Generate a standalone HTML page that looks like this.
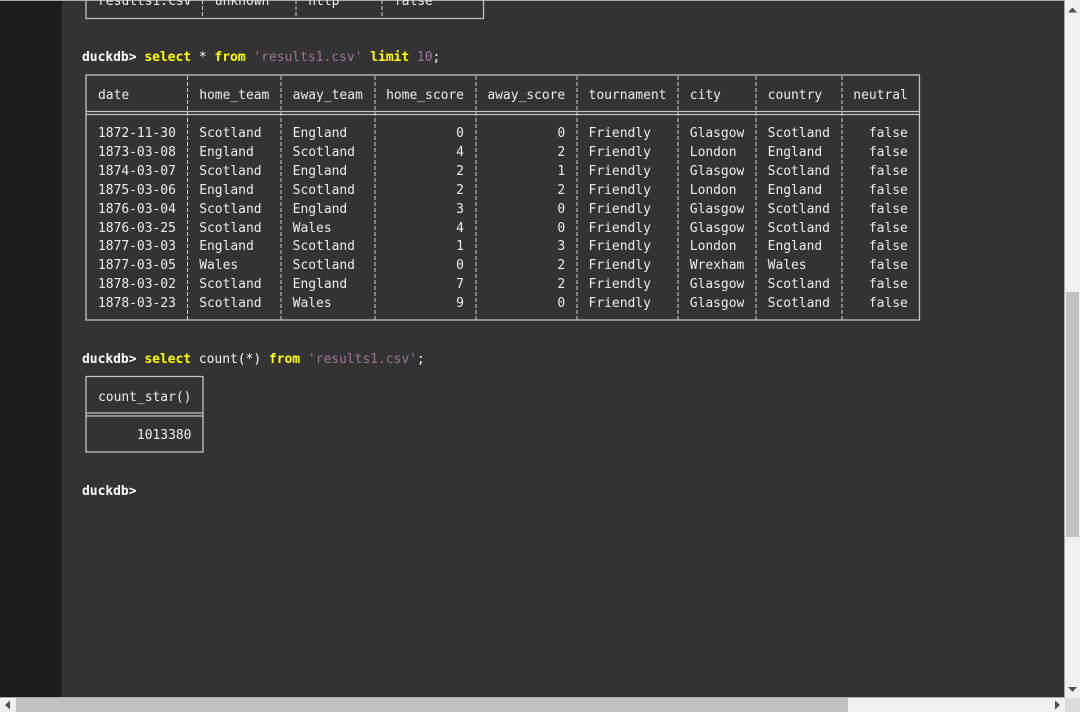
<!DOCTYPE html>
<html>
<head>
<meta charset="utf-8">
<style>
html,body{margin:0;padding:0;width:1080px;height:712px;overflow:hidden;background:#333}
#main{position:absolute;left:62px;top:0;width:1003px;height:698px;background:#333}
#side{position:absolute;left:0;top:0;width:62px;height:698px;background:#1c1c1c}
#top{position:absolute;left:0;top:0;width:1065px;height:1px;background:#aaa}
svg{position:absolute;left:0;top:0}
.l{position:absolute;margin:0;white-space:pre;font:13px/19px "DejaVu Sans Mono","Liberation Mono",monospace;color:#ececec;left:98px;letter-spacing:-0.04px}
.p{left:82px;color:#f4f4f4}
b{font-weight:bold;color:#fff}
.k{font-weight:bold;color:#ffff00}
.s{color:#a0709c}
#vs{position:absolute;left:1065px;top:0;width:15px;height:698px;background:#f1f1f1}
#vt{position:absolute;left:1066px;top:292px;width:13px;height:245px;background:#c1c1c1}
#hs{position:absolute;left:0;top:698px;width:1065px;height:14px;background:#f1f1f1}
#ht{position:absolute;left:16px;top:698px;width:832px;height:14px;background:#c1c1c1}
#cr{position:absolute;left:1065px;top:698px;width:15px;height:14px;background:#dcdcdc}
#bl{position:absolute;left:1064px;top:0;width:1px;height:698px;background:#aaa}
#bb{position:absolute;left:0;top:697px;width:1065px;height:1px;background:#aaa}
</style>
</head>
<body>
<div id="side"></div>
<div id="main"></div>
<div id="top"></div>

<svg width="1080" height="712" viewBox="0 0 1080 712" fill="none">
<g stroke="#c4c4c4" stroke-width="1.3">
<path d="M86 0V18.5H483.5V0"/>
<rect x="86" y="75" width="833.5" height="245"/>
<path d="M86 111.5H919.5M86 114.5H919.5"/>
<rect x="86" y="376.5" width="117" height="75.5"/>
<path d="M86 413H203M86 416H203"/>
</g>
<g stroke="#d0d0d0" stroke-width="1" stroke-dasharray="4 2">
<path d="M202.5 0V18M296 0V18M382 0V18"/>
<path d="M187.5 76V320M281 76V320M375 76V320M476 76V320M577 76V320M678 76V320M756 76V320M842 76V320"/>
</g>
</svg>

<div class="l" style="top:-8px">results1.csv   unknown     http       false</div>

<div class="l p" style="top:48px"><b>duckdb&gt;</b> <span class="k">select</span> * <span class="k">from</span> <span class="s">'results1.csv'</span> <span class="k">limit</span> <span class="s">10</span>;</div>

<div class="l" style="top:86px">date         home_team   away_team   home_score   away_score   tournament   city      country    neutral</div>

<div class="l" style="top:124px">1872-11-30   Scotland    England              0            0   Friendly     Glasgow   Scotland     false</div>
<div class="l" style="top:143px">1873-03-08   England     Scotland             4            2   Friendly     London    England      false</div>
<div class="l" style="top:162px">1874-03-07   Scotland    England              2            1   Friendly     Glasgow   Scotland     false</div>
<div class="l" style="top:181px">1875-03-06   England     Scotland             2            2   Friendly     London    England      false</div>
<div class="l" style="top:200px">1876-03-04   Scotland    England              3            0   Friendly     Glasgow   Scotland     false</div>
<div class="l" style="top:219px">1876-03-25   Scotland    Wales                4            0   Friendly     Glasgow   Scotland     false</div>
<div class="l" style="top:237px">1877-03-03   England     Scotland             1            3   Friendly     London    England      false</div>
<div class="l" style="top:256px">1877-03-05   Wales       Scotland             0            2   Friendly     Wrexham   Wales        false</div>
<div class="l" style="top:275px">1878-03-02   Scotland    England              7            2   Friendly     Glasgow   Scotland     false</div>
<div class="l" style="top:294px">1878-03-23   Scotland    Wales                9            0   Friendly     Glasgow   Scotland     false</div>

<div class="l p" style="top:350px"><b>duckdb&gt;</b> <span class="k">select</span> count(*) <span class="k">from</span> <span class="s">'results1.csv'</span>;</div>

<div class="l" style="top:388px">count_star()</div>
<div class="l" style="top:426px">     1013380</div>

<div class="l p" style="top:482px"><b>duckdb&gt;</b></div>

<div id="bl"></div>
<div id="bb"></div>
<div id="vs"></div>
<div id="vt"></div>
<div id="hs"></div>
<div id="ht"></div>
<div id="cr"></div>
<svg width="1080" height="712" viewBox="0 0 1080 712">
<g fill="#505050">
<path d="M1072.5 7.5L1077 12.5H1068Z"/>
<path d="M1068 687H1077L1072.5 692Z"/>
<path d="M5 705L10 700.5V709.5Z"/>
<path d="M1055 700.5L1060 705L1055 709.5Z"/>
</g>
</svg>
</body>
</html>
